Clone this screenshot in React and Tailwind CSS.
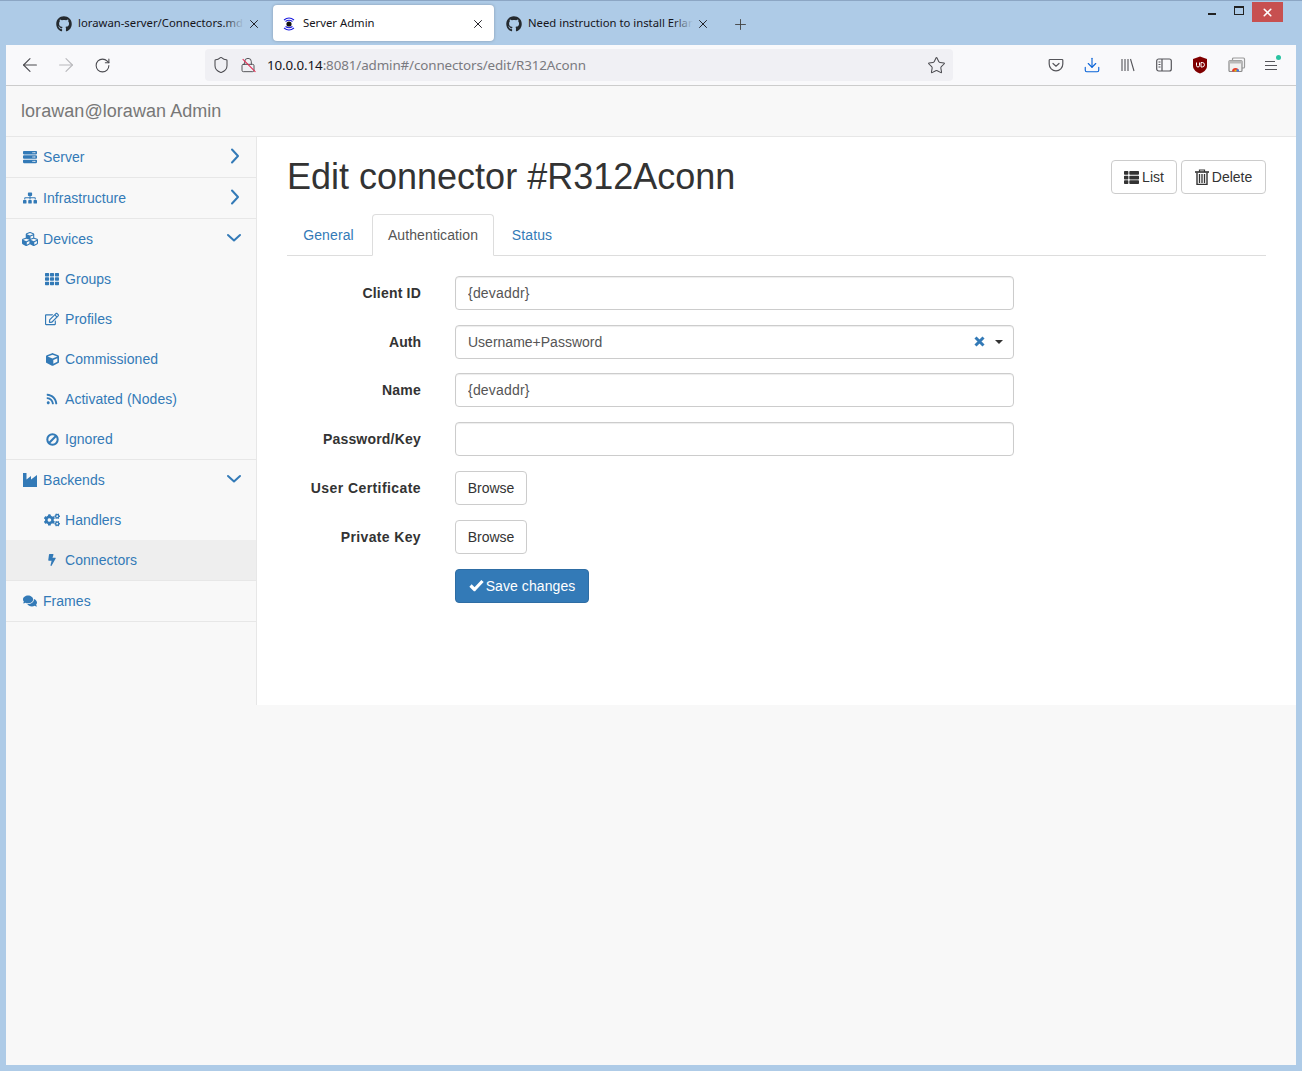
import React from "react";
import { FaServer, FaSitemap, FaCubes, FaTh, FaRegEdit, FaCube, FaRss, FaCogs, FaBolt, FaComments, FaThList, FaGithub } from "react-icons/fa";
import { ArrowLeft, ArrowRight, RotateCw, Shield, Star, X, Plus, Download, Lock } from "lucide-react";

const Chevron = ({ down }) => (
  <svg width="20" height="20" viewBox="0 0 20 20" fill="none" stroke="#337ab7" strokeWidth="2" strokeLinecap="round" strokeLinejoin="round" className={down ? "mr-[12px] -mt-[3px]" : "mr-[11px] -mt-[3px]"}>
    {down ? <path d="M4 7 L10 12.5 L16 7" /> : <path d="M7 3.5 L13 10 L7 16.5" />}
  </svg>
);

const Factory = ({ size }) => (
  <svg width={size} height={size} viewBox="0 0 14 14" fill="currentColor"><path d="M0 0h3.500v6.500L8 3v3.500L14 2v12H0z" /></svg>
);
const Ban = ({ size }) => (
  <svg width={size} height={size} viewBox="0 0 14 14" fill="none" stroke="currentColor" strokeWidth="2.200"><circle cx="7" cy="7" r="5.600" /><path d="M3 11L11 3" /></svg>
);
const Check = () => (
  <svg width="15" height="13" viewBox="0 0 15 13" fill="none" stroke="currentColor" strokeWidth="3.200" strokeLinejoin="round"><path d="M1.500 6.500L5.500 10.500L13.500 2" /></svg>
);
const Trash = () => (
  <svg width="14" height="16" viewBox="0 0 14 16" fill="none" stroke="currentColor" strokeWidth="1.200">
    <path d="M0 3h14" strokeWidth="1.600" /><path d="M4.500 3V1h5v2" /><path d="M2 3.500V15.400h10V3.500" strokeWidth="1.400" /><path d="M4.500 5v9M7 5v9M9.500 5v9" strokeWidth="1.300" />
  </svg>
);

const Top = ({ icon: I, label, size = 14, open, arrow }) => (
  <div className="h-10 flex items-center pl-[16px] text-[#337ab7] text-sm tracking-[0.04px]">
    <span className="w-[16px] flex justify-center shrink-0"><I size={size} /></span>
    <span className="ml-[5px]">{label}</span>
    {arrow && <span className="ml-auto"><Chevron down={open} /></span>}
  </div>
);

const Sub = ({ icon: I, label, active, size = 14 }) => (
  <div className={`h-10 flex items-center pl-[38px] text-[#337ab7] text-sm tracking-[0.04px] ${active ? "bg-[#eeeeee]" : ""}`}>
    <span className="w-[16px] flex justify-center shrink-0"><I size={size} /></span>
    <span className="ml-[5px]">{label}</span>
  </div>
);

const Field = ({ label, track = "tracking-[0.2px]", children }) => (
  <div className="flex items-center h-[34px] gap-[34px]">
    <label className={`w-[134px] text-right text-sm font-bold text-[#333] ${track}`}>{label}</label>
    {children}
  </div>
);

const inputCls = "w-[559px] h-[34px] border border-[#ccc] rounded px-3 text-sm text-[#555] bg-white shadow-[inset_0_1px_1px_rgba(0,0,0,0.075)] outline-none";
const btnCls = "h-[34px] border border-[#ccc] rounded bg-white text-sm text-[#333] flex items-center justify-center";

const Tab = ({ icon, label, active, w, fade }) => (
  <div className={`h-9 flex items-center relative text-[11.300px] pt-px ${w} ${active ? "bg-white rounded shadow-[0_0_3px_rgba(0,0,0,0.25)]" : ""}`} style={{ fontFamily: "'Noto Sans', sans-serif" }}>
    {icon}
    <span className="ml-[30px] mr-[26px] overflow-hidden whitespace-nowrap text-[#15141a]">{label}</span>
    {fade && <span className="absolute right-[26px] w-5 h-5 bg-gradient-to-r from-transparent to-[#aecbe7]" />}
    <X size={14} strokeWidth={1.600} className="absolute right-[9px] text-[#15141a]" />
  </div>
);

const GH = () => <FaGithub size={16} className="absolute left-[8px] text-[#24292e]" />;

export default function App() {
  return (
    <div className="h-[1071px] w-[1302px] bg-[#aecbe7] flex flex-col overflow-hidden border-t border-[#8ca6c4]" style={{ fontFamily: "'Liberation Sans', Arial, sans-serif" }}>
      <div className="h-[44px] flex items-start relative shrink-0">
        <div className="flex gap-[3px] ml-[48px] mt-[4px]">
          <Tab icon={<GH />} label="lorawan-server/Connectors.md" w="w-[222px]" fade />
          <Tab icon={
            <svg width="16" height="16" viewBox="0 0 16 16" className="absolute left-[8px]" fill="none">
              <circle cx="8" cy="8" r="2.600" fill="#111" />
              <path d="M3 4 Q8 0 13 4 M3 12 Q8 16 13 12 M4.500 5.500 Q8 3 11.500 5.500 M4.500 10.500 Q8 13 11.500 10.500" stroke="#1a1ae0" strokeWidth="1.100" />
            </svg>
          } label="Server Admin" active w="w-[221px]" />
          <Tab icon={<GH />} label="Need instruction to install Erlang" w="w-[221px] ml-px" fade />
        </div>
        <Plus size={17} strokeWidth={1.300} className="mt-[15px] ml-[13px] text-[#444]" />
        <div className="ml-auto flex items-start mr-[19px]">
          <div className="w-[8px] h-[2px] bg-[#222] mt-[12px]" />
          <div className="w-[10px] h-[9px] border border-[#222] border-t-2 mt-[5px] ml-[18px]" />
          <div className="w-[31px] h-[20px] bg-[#c75050] ml-[8px] mt-[1px] flex items-center justify-center">
            <X size={13} strokeWidth={3} className="text-white" />
          </div>
        </div>
      </div>

      <div className="flex-1 mx-[6px] mb-[6px] bg-[#f8f8f8] flex flex-col min-h-0">
        <div className="h-[41px] shrink-0 bg-[#f9f9fb] border-b border-[#cccccc] flex items-center relative">
          <ArrowLeft size={22} strokeWidth={1.200} className="ml-[13px] text-[#4a4a4f]" />
          <ArrowRight size={22} strokeWidth={1.200} className="ml-[14px] text-[#b8b8bb]" />
          <RotateCw size={17} strokeWidth={1.500} className="ml-[17px] text-[#4a4a4f]" />
          <div className="ml-[94px] w-[748px] h-8 bg-[#f0f0f4] rounded flex items-center">
            <Shield size={18} strokeWidth={1.400} className="ml-[7px] text-[#4a4a4f]" />
            <span className="relative ml-[10px] w-4 h-4 flex items-center">
              <Lock size={16} strokeWidth={1.400} className="text-[#4a4a4f]" />
              <span className="absolute left-0 top-[8px] w-[18px] h-[1.200px] bg-[#e22850] rotate-45" />
            </span>
            <span className="ml-[11px] pt-px text-[13.400px] whitespace-nowrap tracking-[-0.12px]" style={{ fontFamily: "'Noto Sans', sans-serif" }}>
              <span className="text-[#15141a]">10.0.0.14</span><span className="text-[#7a7a80]">:8081/admin#/connectors/edit/R312Aconn</span>
            </span>
            <Star size={19} strokeWidth={1.300} className="ml-auto mr-[7px] text-[#4a4a4f]" />
          </div>
          <div className="ml-auto flex items-center">
            <svg width="16" height="16" viewBox="0 0 16 16" fill="none" stroke="#55555a" strokeWidth="1.200" className="mr-[20px]"><path d="M2 2.500h12a.8.8 0 0 1 .8.8V7a6.800 6.800 0 0 1-13.600 0V3.300a.8.8 0 0 1 .8-.8z" /><path d="M5 6.500l3 2.800 3-2.800" strokeLinecap="round" /></svg>
            <Download size={18} strokeWidth={1.500} className="mr-[19px] -ml-px text-[#0a64d8]" />
            <svg width="16" height="16" viewBox="0 0 16 16" fill="none" stroke="#55555a" strokeWidth="1.100" className="mr-[20px]"><path d="M2 2v12M5 2v12M8 2v12M10.500 2l3.500 12" /></svg>
            <svg width="16" height="14" viewBox="0 0 16 14" fill="none" stroke="#55555a" strokeWidth="1.200" className="mr-[20px]"><rect x="0.700" y="1" width="14.600" height="12" rx="2" /><path d="M6 1v12M2.500 4h2M2.500 6.500h2M2.500 9h2" /></svg>
            <svg width="16" height="18" viewBox="0 0 16 18" className="mr-[20px]"><path d="M8 0.500L15 3v7c0 4-4 6.500-7 7.500C5 16.500 1 14 1 10V3z" fill="#800000" /><path d="M4.500 6.500v3a1.500 1.500 0 0 0 3 0v-3M9 6.500v4.500h1.200a2.200 2.200 0 0 0 0-4.500z" stroke="#fff" strokeWidth="1" fill="none" /></svg>
            <svg width="18" height="16" viewBox="0 0 18 16" fill="none" className="mr-[18px]"><rect x="4.500" y="1" width="12" height="10" rx="1" stroke="#9a9a9a" strokeWidth="1.200" /><rect x="1" y="3.500" width="13" height="11" rx="1" fill="#f0f0f0" stroke="#8a8a8a" strokeWidth="1.200" /><rect x="1" y="3.500" width="13" height="3" fill="#b8b8b8" /><path d="M4 14.500a3.500 3.500 0 0 1 7 0z" fill="#e33b2e" /><path d="M7.500 14.500a2 2 0 0 1 3.500-1.500v1.500z" fill="#3a7de8" /><rect x="6.500" y="12.800" width="2" height="1.700" fill="#f2c200" /></svg>
            <div className="relative w-[16px] h-[16px] mr-[16px]">
              <div className="absolute left-[1px] top-[4px] w-[10px] h-px bg-[#55555a]" />
              <div className="absolute left-[1px] top-[8px] w-[12px] h-px bg-[#55555a]" />
              <div className="absolute left-[1px] top-[12px] w-[12px] h-px bg-[#55555a]" />
              <div className="absolute right-[-1px] top-[-2px] w-[5px] h-[5px] rounded-full bg-[#2ac3a2]" />
            </div>
          </div>
        </div>

        <div className="h-[51px] shrink-0 border-b border-[#e7e7e7] flex items-center pl-[15px] text-lg text-[#777] tracking-[0.05px]">lorawan@lorawan Admin</div>

        <div className="flex items-start">
          <div className="w-[251px] h-[568px] shrink-0 border-r border-[#e7e7e7]">
            <div className="border-b border-[#e7e7e7]"><Top icon={FaServer} label="Server" arrow /></div>
            <div className="border-b border-[#e7e7e7]"><Top icon={FaSitemap} label="Infrastructure" arrow /></div>
            <div className="border-b border-[#e7e7e7]">
              <Top icon={FaCubes} label="Devices" size={18} arrow open />
              <Sub icon={FaTh} label="Groups" />
              <Sub icon={FaRegEdit} label="Profiles" />
              <Sub icon={FaCube} label="Commissioned" size={13} />
              <Sub icon={FaRss} label="Activated (Nodes)" size={12} />
              <Sub icon={Ban} label="Ignored" size={13} />
            </div>
            <div className="border-b border-[#e7e7e7]">
              <Top icon={Factory} label="Backends" arrow open />
              <Sub icon={FaCogs} label="Handlers" size={16} />
              <Sub icon={FaBolt} label="Connectors" size={12} active />
            </div>
            <div className="border-b border-[#e7e7e7]"><Top icon={FaComments} label="Frames" /></div>
          </div>

          <div className="flex-1 h-[568px] bg-white px-[30px]">
            <div className="flex items-start h-[77px]">
              <h1 className="text-[36px] leading-[40px] text-[#333] mt-[20px] whitespace-nowrap">Edit connector #R312Aconn</h1>
              <div className="ml-auto mt-[23px] flex gap-1">
                <button className={`${btnCls} w-[66px] gap-[3px]`}><FaThList size={15} />List</button>
                <button className={`${btnCls} w-[85px] gap-[3px]`}><Trash />Delete</button>
              </div>
            </div>
            <div className="flex border-b border-[#ddd] h-[42px] gap-[2px] text-sm tracking-[0.1px]">
              <div className="w-[83px] h-[41px] flex items-center justify-center text-[#337ab7]">General</div>
              <div className="w-[122px] h-[42px] flex items-center justify-center text-[#555] bg-white border border-[#ddd] border-b-white rounded-t">Authentication</div>
              <div className="w-[72px] h-[41px] flex items-center justify-center text-[#337ab7]">Status</div>
            </div>
            <div className="flex flex-col gap-[14.850px] mt-[19.700px]">
              <Field label="Client ID"><input className={`${inputCls} tracking-[0.2px]`} defaultValue="{devaddr}" /></Field>
              <Field label="Auth" track="tracking-normal">
                <div className={`${inputCls} flex items-center`}>
                  <span>Username+Password</span>
                  <svg width="11" height="11" viewBox="0 0 11 11" stroke="#337ab7" strokeWidth="3" className="ml-auto"><path d="M1.500 1.500L9.500 9.500M9.500 1.500L1.500 9.500" /></svg>
                  <span className="ml-[10px] mr-[-2px] w-0 h-0 border-x-[4px] border-x-transparent border-t-[4px] border-t-[#333]" />
                </div>
              </Field>
              <Field label="Name"><input className={`${inputCls} tracking-[0.2px]`} defaultValue="{devaddr}" /></Field>
              <Field label="Password/Key"><input className={inputCls} /></Field>
              <Field label="User Certificate" track="tracking-[0.42px]"><button className={`${btnCls} w-[72px]`}>Browse</button></Field>
              <Field label="Private Key" track="tracking-[0.36px]"><button className={`${btnCls} w-[72px]`}>Browse</button></Field>
              <Field label="">
                <button className="h-[34px] w-[134px] rounded bg-[#337ab7] border border-[#2e6da4] text-white text-sm tracking-[0.08px] flex items-center justify-center gap-[2px]"><Check />Save changes</button>
              </Field>
            </div>
          </div>
        </div>
      </div>
    </div>
  );
}
